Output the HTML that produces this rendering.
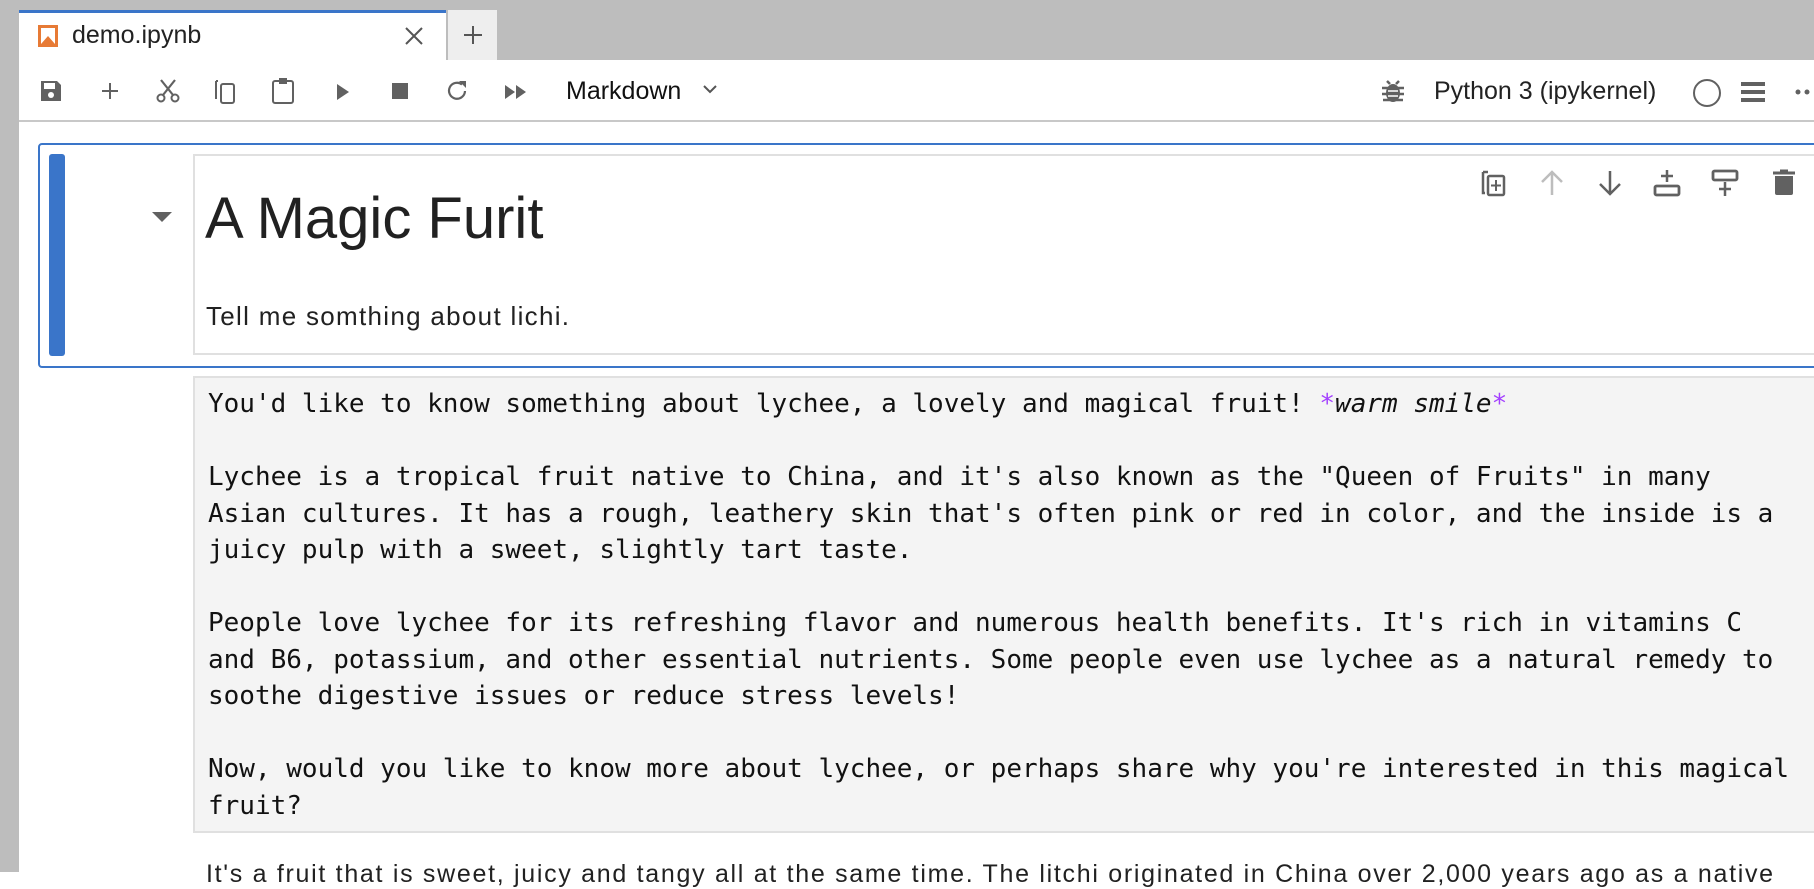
<!DOCTYPE html>
<html><head><meta charset="utf-8"><style>
*{margin:0;padding:0;box-sizing:border-box}
body{width:1814px;height:872px;overflow:hidden;background:#fff;position:relative;font-family:"Liberation Sans",sans-serif;color:#212121}
.abs{position:absolute}
svg{position:absolute}
pre{font-family:"DejaVu Sans Mono","Liberation Mono",monospace;font-size:26px;line-height:36.5px;color:#111;white-space:pre}
</style></head><body>
<div class="abs" style="left:0;top:0;width:1814px;height:60px;background:#bdbdbd"></div>
<div class="abs" style="left:0;top:0;width:19px;height:872px;background:#bdbdbd"></div>
<div class="abs" style="left:19px;top:10px;width:427px;height:52px;background:#fff;border-top:3px solid #3a75c9"></div>
<svg style="left:38px;top:25px" width="20" height="22"><rect width="20" height="22" fill="#e77a35"/><rect x="3" y="3" width="14" height="16" fill="#fff"/><path d="M3 19 L10 11 L17 19Z" fill="#e77a35"/></svg>
<div class="abs" style="left:72px;top:21px;font-size:25px;color:#222">demo.ipynb</div>
<svg style="left:403px;top:25px" width="22" height="22"><path d="M3 3L19 19M19 3L3 19" stroke="#555" stroke-width="2"/></svg>
<div class="abs" style="left:448px;top:10px;width:49px;height:50px;background:#eee"></div>
<svg style="left:462px;top:24px" width="22" height="22"><path d="M11 2V20M2 11H20" stroke="#555" stroke-width="2"/></svg>
<div class="abs" style="left:19px;top:120px;width:1795px;height:2px;background:#c8c8c8"></div>

<svg style="left:39px;top:79px" width="24" height="24"><path d="M2 2H18L22 6V22H2Z" fill="#616161"/><rect x="5" y="4" width="11" height="6" fill="#fff"/><circle cx="12" cy="16" r="3" fill="#fff"/></svg>
<svg style="left:99px;top:80px" width="22" height="22"><path d="M11 3V19M3 11H19" stroke="#616161" stroke-width="2"/></svg>
<svg style="left:155px;top:78px" width="26" height="26"><circle cx="6" cy="20" r="3.5" fill="none" stroke="#616161" stroke-width="2"/><circle cx="20" cy="20" r="3.5" fill="none" stroke="#616161" stroke-width="2"/><path d="M8 17L20 2M18 17L6 2" stroke="#616161" stroke-width="2.2"/></svg>
<svg style="left:213px;top:77px" width="26" height="28"><path d="M3 4V22" stroke="#616161" stroke-width="2" fill="none"/><path d="M3 4H5" stroke="#616161" stroke-width="2"/><rect x="8" y="7" width="13" height="19" rx="2" fill="none" stroke="#616161" stroke-width="2"/></svg>
<svg style="left:270px;top:77px" width="26" height="28"><rect x="3" y="4" width="20" height="22" rx="2" fill="none" stroke="#616161" stroke-width="2"/><rect x="9" y="1" width="8" height="6" fill="#616161"/></svg>
<svg style="left:334px;top:82px" width="18" height="20"><path d="M3 2L15 10L3 18Z" fill="#616161"/></svg>
<svg style="left:391px;top:82px" width="18" height="18"><rect x="1" y="1" width="16" height="16" fill="#616161"/></svg>
<svg style="left:446px;top:79px" width="24" height="24"><path d="M19 12A8 8 0 1 1 16 5.5" fill="none" stroke="#616161" stroke-width="2.2"/><path d="M13 2H20V9Z" fill="#616161"/></svg>
<svg style="left:503px;top:83px" width="26" height="18"><path d="M2 2L12 9L2 16ZM13 2L23 9L13 16Z" fill="#616161"/></svg>
<div class="abs" style="left:566px;top:77px;font-size:25px;color:#111">Markdown</div>
<svg style="left:702px;top:84px" width="16" height="12"><path d="M2 2L8 8L14 2" stroke="#555" stroke-width="2" fill="none"/></svg>

<svg style="left:1381px;top:78px" width="24" height="26"><ellipse cx="12" cy="15" rx="7" ry="9" fill="#616161"/><path d="M1 10H23M1 16H23M2 22H22M6 3L9 6M18 3L15 6" stroke="#616161" stroke-width="2.5"/><path d="M7 13H17M7 18H17" stroke="#fff" stroke-width="1.5"/></svg>
<div class="abs" style="left:1434px;top:77px;font-size:25px;color:#222">Python 3 (ipykernel)</div>
<svg style="left:1692px;top:78px" width="30" height="30"><circle cx="15" cy="15" r="13" fill="none" stroke="#616161" stroke-width="2"/></svg>
<svg style="left:1740px;top:80px" width="26" height="24"><path d="M1 4H25M1 12H25M1 20H25" stroke="#616161" stroke-width="4"/></svg>
<svg style="left:1794px;top:88px" width="20" height="8"><circle cx="4" cy="4" r="2.5" fill="#616161"/><circle cx="13" cy="4" r="2.5" fill="#616161"/></svg>

<div class="abs" style="left:38px;top:143px;width:1800px;height:225px;border:2px solid #3a75c9;border-radius:4px"></div>
<div class="abs" style="left:49px;top:154px;width:16px;height:202px;background:#3a75c9;border-radius:3px"></div>
<svg style="left:151px;top:211px" width="22" height="12"><path d="M1 1H21L11 11Z" fill="#616161"/></svg>
<div class="abs" style="left:193px;top:154px;width:1640px;height:201px;border:2px solid #e0e0e0;background:#fff"></div>
<div class="abs" style="left:205px;top:186px;font-size:58px;color:#212121;line-height:66px">A Magic Furit</div>
<div class="abs" style="left:206px;top:301px;font-size:26px;color:#212121;line-height:30px;letter-spacing:1.3px">Tell me somthing about lichi.</div>

<svg style="left:1480px;top:168px" width="28" height="30"><path d="M3 4V25H5" stroke="#616161" stroke-width="2.5" fill="none"/><path d="M3 4H8" stroke="#616161" stroke-width="2.5"/><rect x="8" y="8" width="16" height="19" rx="1.5" fill="none" stroke="#616161" stroke-width="2.5"/><path d="M16 12V23M11 17.5H21" stroke="#616161" stroke-width="2"/></svg>
<svg style="left:1538px;top:169px" width="28" height="28"><path d="M14 26V3M4 13L14 3L24 13" stroke="#bdbdbd" stroke-width="2.5" fill="none"/></svg>
<svg style="left:1596px;top:169px" width="28" height="28"><path d="M14 2V25M4 15L14 25L24 15" stroke="#616161" stroke-width="2.5" fill="none"/></svg>
<svg style="left:1653px;top:168px" width="28" height="30"><path d="M14 2V14M8 8H20" stroke="#616161" stroke-width="2.5"/><rect x="2" y="18" width="24" height="9" rx="1.5" fill="none" stroke="#616161" stroke-width="2.8"/></svg>
<svg style="left:1711px;top:168px" width="28" height="30"><rect x="2" y="3" width="24" height="9" rx="1.5" fill="none" stroke="#616161" stroke-width="2.8"/><path d="M14 14V28M8 21H20" stroke="#616161" stroke-width="2.5"/></svg>
<svg style="left:1772px;top:168px" width="24" height="30"><path d="M1 5H23" stroke="#616161" stroke-width="3"/><path d="M8 3H16" stroke="#616161" stroke-width="3"/><path d="M3 8H21V25Q21 27 19 27H5Q3 27 3 25Z" fill="#616161"/></svg>

<div class="abs" style="left:193px;top:376px;width:1640px;height:457px;background:#f4f4f4;border:2px solid #e0e0e0"></div>
<pre class="abs" style="left:208px;top:386px">You'd like to know something about lychee, a lovely and magical fruit! <span style="color:#a33fff">*</span><i>warm smile</i><span style="color:#a33fff">*</span>

Lychee is a tropical fruit native to China, and it's also known as the "Queen of Fruits" in many
Asian cultures. It has a rough, leathery skin that's often pink or red in color, and the inside is a
juicy pulp with a sweet, slightly tart taste.

People love lychee for its refreshing flavor and numerous health benefits. It's rich in vitamins C
and B6, potassium, and other essential nutrients. Some people even use lychee as a natural remedy to
soothe digestive issues or reduce stress levels!

Now, would you like to know more about lychee, or perhaps share why you're interested in this magical
fruit?</pre>
<div class="abs" style="left:206px;top:860px;font-size:25px;color:#212121;white-space:nowrap;letter-spacing:1.7px">It's a fruit that is sweet, juicy and tangy all at the same time. The litchi originated in China over 2,000 years ago as a native</div>
</body></html>
